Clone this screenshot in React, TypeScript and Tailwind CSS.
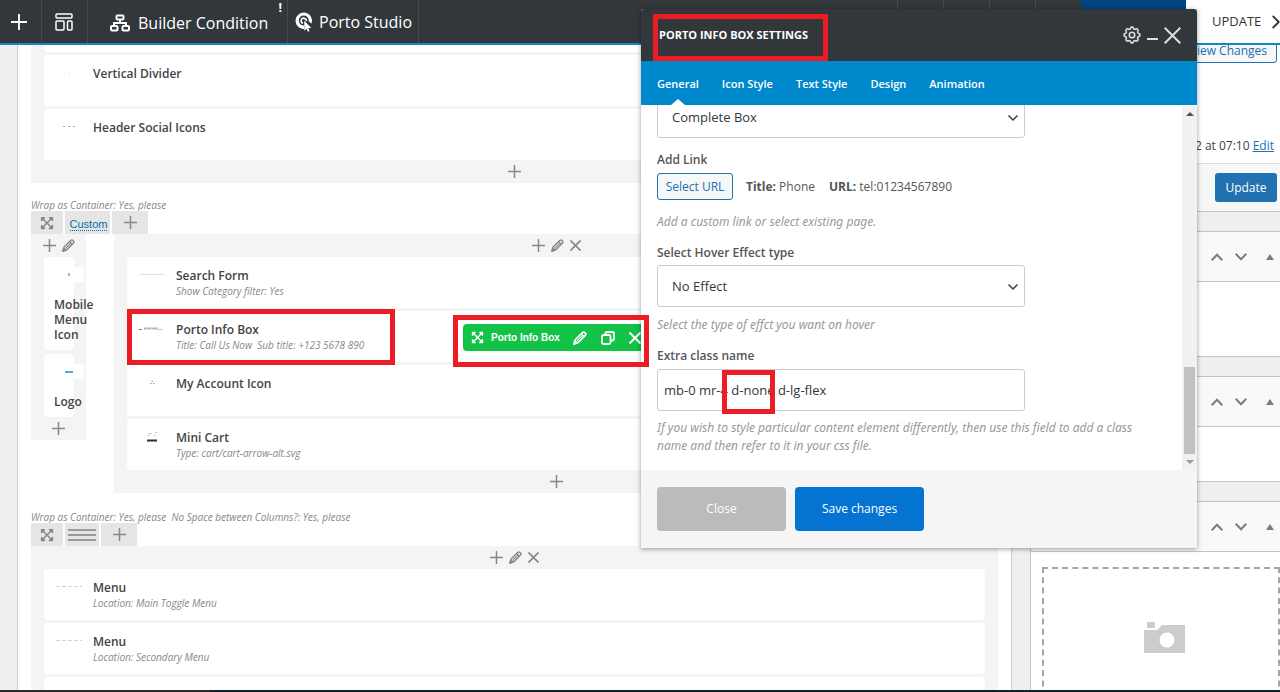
import { useState } from "react";
import type { ReactNode } from "react";
import { ChevronDown, ChevronRight } from "lucide-react";
import { FaExpandArrowsAlt } from "react-icons/fa";

// Outline with eight rounded teeth around a 20x20 centre
const gearPath =
  Array.from({ length: 96 }, (_, i) => {
    const a = (i / 96) * Math.PI * 2;
    const r = 7.9 + Math.tanh(2 * Math.cos(a * 8)) * 0.9;
    return `${i ? "L" : "M"}${(10 + r * Math.sin(a)).toFixed(2)} ${(10 - r * Math.cos(a)).toFixed(2)}`;
  }).join("") + "Z";

function GearIcon() {
  return (
    <svg viewBox="0 0 20 20" className="size-[18px]" fill="none" stroke="currentColor" strokeWidth="1.8">
      <path d={gearPath} strokeLinejoin="round" />
      <circle cx="10" cy="10" r="3" />
    </svg>
  );
}

function PlusIcon({ className = "size-[13px]" }: { className?: string }) {
  return (
    <svg viewBox="0 0 13 13" className={className} stroke="currentColor" strokeWidth="1.5">
      <path d="M6.500 0v13M0 6.500h13" />
    </svg>
  );
}

function CloseIcon({ className = "size-[11px]", strokeWidth = 1.8 }: { className?: string; strokeWidth?: number }) {
  return (
    <svg viewBox="0 0 12 12" className={className} stroke="currentColor" strokeWidth={strokeWidth}>
      <path d="M.5.5l11 11M11.500.5l-11 11" />
    </svg>
  );
}

function PencilIcon({ className = "size-[13px]" }: { className?: string }) {
  return (
    <svg viewBox="0 0 14 14" className={className} fill="none" stroke="currentColor" strokeWidth="1.6" strokeLinejoin="round">
      <path d="M1 13l1.2-4.3 7.2-7.1c.7-.7 1.7-.7 2.4 0l.5.5c.7.7.7 1.6 0 2.3L5.2 11.6z" />
      <path d="M3.6 10.4l6-6M8.3 2.7l3 3" strokeWidth="1.2" />
      <path d="M1 13l.8-2.9 2 2z" fill="currentColor" />
    </svg>
  );
}

function CopyIcon() {
  return (
    <svg viewBox="0 0 14 14" className="size-[14px]" fill="none" stroke="currentColor" strokeWidth="1.8">
      <rect x="1" y="4" width="8.5" height="9" rx="1.5" />
      <path d="M4.500 4V2.500C4.500 1.500 5 1 6 1h5.500c1 0 1.500.5 1.500 1.500V8c0 1-.5 1.500-1.500 1.500h-2" />
    </svg>
  );
}

function LayoutIcon() {
  return (
    <svg viewBox="0 0 18 18" className="size-[18px]" fill="none" stroke="currentColor" strokeWidth="1.5">
      <rect x="1" y="1" width="16" height="4" rx="1" />
      <rect x="1" y="8" width="8" height="9" rx="1" />
      <rect x="12.500" y="8" width="4.500" height="9" rx="1" />
    </svg>
  );
}

function SitemapIcon() {
  return (
    <svg viewBox="0 0 22 18" className="h-[18px] w-[22px]" fill="none" stroke="currentColor" strokeWidth="2">
      <rect x="7.500" y="1.500" width="7" height="4" rx="1" />
      <rect x="2" y="12" width="6.500" height="4.500" rx="1" />
      <rect x="13.500" y="12" width="6.500" height="4.500" rx="1" />
      <path d="M11 5.500V9M5 12V9h12v3" />
    </svg>
  );
}

function StudioIcon() {
  return (
    <svg viewBox="0 0 20 20" className="size-5">
      <path fill="currentColor" d="M8.700.5a8.200 8.200 0 0 0-3 15.800c1 .4 2.600.7 3.300.6l.1-3.400a5 5 0 1 1 4.600-4.200l2.700 2.300A8.200 8.200 0 0 0 8.700.5z" />
      <path fill="none" stroke="currentColor" strokeWidth="1.600" d="M8 11.300a2.600 2.600 0 1 1 3.300-2.200" />
      <path fill="currentColor" d="M9.300 8.700v10l2.300-2 1.300 3 1.600-.7-1.300-2.900 3.100-.2z" />
    </svg>
  );
}

function CameraIcon() {
  return (
    <svg viewBox="0 0 41 31" className="h-[31px] w-[41px]" fill="#ccc">
      <path d="M3 0h8v6H3z" />
      <path fillRule="evenodd" d="M0 8h13l5-5h23v28H0zM23 10.500a7.500 7.500 0 1 0 0 15 7.500 7.500 0 0 0 0-15z" />
    </svg>
  );
}

function BoxArrow({ down }: { down?: boolean }) {
  return (
    <svg viewBox="0 0 12 8" className="h-2 w-3" fill="none" stroke="currentColor" strokeWidth="2">
      <path d={down ? "M.7.8L6 6.300 11.300.8" : "M.7 7.200L6 1.700l5.300 5.500"} />
    </svg>
  );
}

type ThumbKind = "none" | "divider" | "social" | "search" | "info" | "account" | "cart" | "menu";

function Thumb({ kind }: { kind: ThumbKind }) {
  return (
    <svg viewBox="0 0 32 32" className="size-8 shrink-0" fill="none" strokeWidth="1">
      {kind === "divider" && <path d="M16.500 14v4" stroke="#eee" />}
      {kind === "social" && <path d="M10 15.500h12" stroke="#aaa" strokeDasharray="2 3" />}
      {kind === "search" && <path d="M3 15.500h26" stroke="#e2e2e2" />}
      {kind === "info" && (
        <>
          <path d="M3 16.500h3" stroke="#777" />
          <path d="M8 15.500h14" stroke="#aaa" strokeWidth="2" strokeDasharray="2 .5" />
          <path d="M22 16.500h5" stroke="#ccc" />
        </>
      )}
      {kind === "account" && <path d="M14 16.500h1.500M17 16.500h1.500M15.500 14.500h1.500" stroke="#999" />}
      {kind === "cart" && (
        <>
          <path d="M12 12.500h4M12 14.500h2M18 14.500h2M19 11.500h2" stroke="#ccc" />
          <path d="M11 19.500h10" stroke="#2c2f36" strokeWidth="2" />
        </>
      )}
      {kind === "menu" && <path d="M3 15.500h26" stroke="#d4d4d4" strokeDasharray="4 2" />}
    </svg>
  );
}

function ElementCard({ kind = "none", title, note, children }: { kind?: ThumbKind; title?: string; note?: string; children?: ReactNode }) {
  return (
    <div className="relative flex h-[51px] shrink-0 gap-2 rounded-sm bg-white pl-[9px] pt-[2px]">
      <Thumb kind={kind} />
      <div className="pt-2">
        <h4 className="text-xs leading-[18px] font-semibold text-[#444]">{title}</h4>
        {note && <p className="text-[10px] leading-3 whitespace-pre text-[#888] italic">{note}</p>}
      </div>
      {children}
    </div>
  );
}

const iconButton = "flex items-center justify-center text-[#888]";

function ColumnControls({ removable = true }: { removable?: boolean }) {
  return (
    <div className="flex h-[23px] items-center justify-center gap-[6px]">
      <button className={iconButton} aria-label="Add element"><PlusIcon /></button>
      <button className={iconButton} aria-label="Edit column"><PencilIcon /></button>
      {removable && (
        <button className={iconButton} aria-label="Remove column"><CloseIcon /></button>
      )}
    </div>
  );
}

function AddFooter() {
  return (
    <div className="flex h-[23px] items-center justify-center">
      <button className={iconButton} aria-label="Append element"><PlusIcon /></button>
    </div>
  );
}

function RowTabs({ children }: { children: ReactNode }) {
  return (
    <div className="flex h-[23px] gap-[2px]">
      <button className={`${iconButton} w-8 bg-[#e5e5e5]`} aria-label="Move row"><FaExpandArrowsAlt size={14} /></button>
      {children}
      <button className={`${iconButton} w-9 bg-[#e5e5e5]`} aria-label="Add column"><PlusIcon /></button>
    </div>
  );
}

function NarrowCard({ title, wide }: { title: string; wide?: boolean }) {
  return (
    <div className="w-[30px] rounded-sm bg-white pt-[10px] pb-2 pl-[10px]">
      <div className="mb-[15px] flex h-[15px] w-[30px] items-center justify-center bg-white">
        {wide ? <span className="h-[2px] w-2 bg-[#4ab0dd]" /> : <span className="h-[3px] w-[2px] bg-[#7cc6e8]" />}
      </div>
      <h4 className="w-10 text-xs leading-[15px] font-semibold text-[#444]">{title}</h4>
    </div>
  );
}

// Red marker frame, placed over what it points at
function Marker({ className }: { className: string }) {
  return <div className={`pointer-events-none absolute z-30 border-[5px] border-[#ed1c24] ${className}`} />;
}

function TopBar() {
  return (
    <header className="flex h-[45px] shrink-0 border-b-2 border-[#1389c4] bg-[#32373c] text-white">
      <button className="flex w-[42px] items-center justify-center border-r border-[#464b50] pr-1" aria-label="Add">
        <PlusIcon className="size-4" />
      </button>
      <button className="flex w-[46px] items-center justify-center border-r border-[#464b50] pr-[2px]" aria-label="Templates">
        <LayoutIcon />
      </button>
      <button className="relative flex w-[200px] items-center gap-[7px] border-r border-[#464b50] pt-[2px] pl-[21px] text-base whitespace-nowrap">
        <SitemapIcon />
        Builder Condition
        <span className="absolute top-0 right-[5px] text-xs leading-4 font-bold">!</span>
      </button>
      <button className="flex w-[131px] items-center gap-1 border-r border-[#464b50] pt-px pl-[7px] text-base whitespace-nowrap">
        <StudioIcon />
        Porto Studio
      </button>
      <div className="ml-auto flex">
        {[0, 1, 2, 3].map((i) => (
          <div key={i} className="w-[46px] border-l border-[#464b50]" />
        ))}
        <div className="w-[105px] bg-[#004480]" />
        <div className="flex w-[94px] items-center overflow-hidden bg-white pt-px pl-[26px] text-[#32373c]">
          <button className="text-[13px]">UPDATE</button>
          <ChevronRight size={22} strokeWidth={2} className="ml-1 shrink-0" />
        </div>
      </div>
    </header>
  );
}

function Builder() {
  return (
    <main className="ml-[17px] min-w-0 flex-1 overflow-hidden border-x border-[#ccc] bg-white pr-[13px] pl-[13px]">
      <section className="bg-[#f4f4f4] px-[13px]">
        <div className="-mt-[44px] flex flex-col gap-[3px]">
          <ElementCard />
          <ElementCard kind="divider" title="Vertical Divider" />
          <ElementCard kind="social" title="Header Social Icons" />
        </div>
        <AddFooter />
      </section>

      <section className="mt-4">
        <p className="text-[10px] leading-3 text-[#888] italic">Wrap as Container: Yes, please</p>
        <RowTabs>
          <div className="flex w-[45px] items-center justify-center bg-[#e5e5e5] pt-[3px] pl-[2px]">
            <a href="#custom" className="border-b border-dotted border-[#0073aa] font-['Liberation_Sans',sans-serif] text-[11px] leading-3 text-[#0073aa]">Custom</a>
          </div>
        </RowTabs>
        <div className="flex items-start gap-7">
          <div className="w-[55px] bg-[#f4f4f4]">
            <ColumnControls removable={false} />
            <div className="flex flex-col gap-1 pl-[13px]">
              <NarrowCard title="Mobile Menu Icon" />
              <NarrowCard title="Logo" wide />
            </div>
            <AddFooter />
          </div>
          <div className="flex-1 bg-[#f4f4f4] px-[13px]">
            <ColumnControls />
            <div className="flex flex-col gap-[3px]">
              <ElementCard kind="search" title="Search Form" note="Show Category filter: Yes" />
              <ElementCard kind="info" title="Porto Info Box" note="Title: Call Us Now  Sub title: +123 5678 890">
                <Marker className="-top-[2px] left-0 h-14 w-[268px]" />
                <div className="absolute top-[13px] left-1/2 -ml-[93px] flex h-[27px] w-[186px] items-center rounded-sm bg-[#12c348] pr-2 pl-2 text-white">
                  <FaExpandArrowsAlt size={13} />
                  <span className="ml-[7px] flex-1 font-['Liberation_Sans',sans-serif] text-[10px] font-bold whitespace-nowrap">Porto Info Box</span>
                  <div className="flex items-center gap-[14px]">
                    <button aria-label="Edit"><PencilIcon className="size-[14px]" /></button>
                    <button aria-label="Clone"><CopyIcon /></button>
                    <button aria-label="Delete"><CloseIcon className="size-3" strokeWidth={2} /></button>
                  </div>
                  <Marker className="-top-[9px] -left-[10px] h-[52px] w-[196px]" />
                </div>
              </ElementCard>
              <ElementCard kind="account" title="My Account Icon" />
              <ElementCard kind="cart" title="Mini Cart" note="Type: cart/cart-arrow-alt.svg" />
            </div>
            <AddFooter />
          </div>
        </div>
      </section>

      <section className="mt-[18px]">
        <p className="text-[10px] leading-3 whitespace-pre text-[#888] italic">Wrap as Container: Yes, please  No Space between Columns?: Yes, please</p>
        <RowTabs>
          <button className="flex w-[34px] flex-col items-center justify-center gap-[3px] bg-[#e5e5e5]" aria-label="Row layout">
            <span className="h-[2px] w-7 bg-[#999]" />
            <span className="h-[2px] w-7 bg-[#999]" />
            <span className="h-[2px] w-7 bg-[#999]" />
          </button>
        </RowTabs>
        <div className="bg-[#f4f4f4] px-[13px]">
          <ColumnControls />
          <div className="flex flex-col gap-[3px]">
            <ElementCard kind="menu" title="Menu" note="Location: Main Toggle Menu" />
            <ElementCard kind="menu" title="Menu" note="Location: Secondary Menu" />
            <ElementCard />
          </div>
        </div>
      </section>
    </main>
  );
}

function MetaBox({ children, className }: { children?: ReactNode; className: string }) {
  return (
    <section className="mt-[19px] border-y border-l border-[#c3c4c7] bg-white">
      <div className="flex h-[50px] items-center justify-end border-b border-[#c3c4c7] bg-[#f9f9f9] text-[#787c82]">
        <button aria-label="Move up"><BoxArrow /></button>
        <button aria-label="Move down" className="ml-3"><BoxArrow down /></button>
        <button aria-label="Toggle panel" className="mr-[6px] ml-[19px]">
          <svg viewBox="0 0 8 6" className="h-[6px] w-2" fill="currentColor"><path d="M4 0l4 6H0z" /></svg>
        </button>
      </div>
      <div className={className}>{children}</div>
    </section>
  );
}

function Sidebar() {
  return (
    <aside className="ml-[18px] w-[250px] shrink-0 overflow-hidden">
      <section className="border-b border-l border-[#c3c4c7] bg-white">
        <div className="flex h-[118px] flex-col items-end justify-between pr-[3px] pb-2">
          <button className="-mt-[12px] h-[30px] rounded-[3px] border border-[#2271b1] bg-[#f6f7f7] px-[9px] pt-[6px] text-xs text-[#2271b1]">Preview Changes</button>
          <p className="pr-[3px] text-xs leading-[18px] text-[#3c434a]">
            2022 at 07:10 <a href="#edit" className="text-[#2271b1] underline">Edit</a>
          </p>
        </div>
        <div className="flex h-12 items-center justify-end border-t border-[#dcdcde] bg-[#f6f7f7] pr-[3px]">
          <button className="h-[29px] w-[62px] rounded-[3px] bg-[#2271b1] text-xs text-white">Update</button>
        </div>
      </section>
      <MetaBox className="h-[74px]" />
      <MetaBox className="h-[54px]" />
      <MetaBox className="pt-[15px] pl-[11px]">
        <div className="flex h-[140px] items-center justify-center border-2 border-dashed border-[#a5a5a5] pl-[6px]">
          <CameraIcon />
        </div>
      </MetaBox>
    </aside>
  );
}

const tabs = ["General", "Icon Style", "Text Style", "Design", "Animation"];
const fieldClass = "h-[42px] w-full appearance-none rounded-[3px] border border-[#ccc] bg-white text-[13px] text-[#32373c] outline-none";
const hintClass = "font-['Noto_Sans',sans-serif] text-xs leading-[18px] text-[#999] italic";
const labelClass = "text-xs leading-[18px] font-semibold";

function SelectField({ id, label, value }: { id: string; label: string; value: string }) {
  return (
    <div className="relative w-[368px]">
      <select id={id} aria-label={label} className={`${fieldClass} px-[14px]`}>
        <option>{value}</option>
      </select>
      <ChevronDown size={16} strokeWidth={2.500} className="pointer-events-none absolute top-[14px] right-1 text-[#444]" />
    </div>
  );
}

function SettingsDialog() {
  const [active, setActive] = useState("General");
  const [extraClass, setExtraClass] = useState("mb-0 mr-4 d-none d-lg-flex");

  return (
    <div role="dialog" aria-label="Porto Info Box Settings" className="absolute top-[9px] right-[83px] z-20 w-[556px] overflow-hidden rounded-t-[3px] bg-white text-[#555] shadow-[0_1px_5px_rgba(0,0,0,0.4)]">
      <div className="relative flex h-[52px] items-center justify-between bg-[#32373c] pr-4 pl-[18px]">
        <h2 className="text-[11px] font-bold text-white">PORTO INFO BOX SETTINGS</h2>
        <Marker className="top-[5px] left-3 h-[47px] w-[175px]" />
        <div className="flex items-center text-[#ddd]">
          <button aria-label="Options"><GearIcon /></button>
          <button aria-label="Minimize" className="ml-[6px] flex h-4 w-[11px] items-end pb-[3px]"><span className="h-[2px] w-full bg-[#ddd]" /></button>
          <button aria-label="Close dialog" className="ml-[6px]"><CloseIcon className="size-[17px]" strokeWidth={1.4} /></button>
        </div>
      </div>

      <div role="tablist" className="flex h-11 gap-[23px] bg-[#0088cc] pl-4 text-[11px] font-semibold text-white">
        {tabs.map((tab) => (
          <button key={tab} role="tab" aria-selected={tab === active} onClick={() => setActive(tab)} className="relative pt-[2px]">
            {tab}
            {tab === active && (
              <span className="absolute bottom-0 left-1/2 -ml-[7px] border-x-[7px] border-b-[6px] border-x-transparent border-b-white" />
            )}
          </button>
        ))}
      </div>

      <div className="flex h-[365px] overflow-hidden">
        <div className="flex-1 pl-4 text-[13px] leading-[18px]">
          <div className="-mt-[9px]">
            <SelectField id="link-scope" label="Apply link to" value="Complete Box" />
          </div>

          <h3 className={`mt-[13px] ${labelClass}`}>Add Link</h3>
          <div className="mt-1 flex items-center text-xs">
            <button className="h-[27px] w-[76px] rounded-[3px] border border-[#2271b1] bg-[#f6f7f7] text-[#2271b1]">Select URL</button>
            <span className="ml-[13px]"><b>Title:</b> Phone</span>
            <span className="ml-[14px]"><b>URL:</b> tel:01234567890</span>
          </div>
          <p className={`mt-[13px] ${hintClass}`}>Add a custom link or select existing page.</p>

          <label htmlFor="hover-effect" className={`mt-[13px] mb-[3px] block ${labelClass}`}>Select Hover Effect type</label>
          <SelectField id="hover-effect" label="Select Hover Effect type" value="No Effect" />
          <p className={`mt-[9px] ${hintClass}`}>Select the type of effct you want on hover</p>

          <label htmlFor="extra-class" className={`mt-[13px] mb-1 block ${labelClass}`}>Extra class name</label>
          <div className="relative w-[368px]">
            <input id="extra-class" type="text" value={extraClass} onChange={(e) => setExtraClass(e.target.value)} className={`${fieldClass} px-[6px]`} />
            <Marker className="top-[1px] left-[65px] h-11 w-[53px]" />
          </div>
          <p className={`mt-2 mr-7 ${hintClass}`}>
            If you wish to style particular content element differently, then use this field to add a class name and then refer to it in your css file.
          </p>
        </div>
        <div className="mt-px flex w-[15px] flex-col items-center bg-[#f1f1f1] py-[6px]">
          <svg viewBox="0 0 8 4" className="h-1 w-2" fill="#505050"><path d="M4 0l4 4H0z" /></svg>
          <div className="mt-auto mb-[6px] h-[87px] w-[11px] bg-[#c1c1c1]" />
          <svg viewBox="0 0 8 4" className="h-1 w-2" fill="#999"><path d="M4 4l4-4H0z" /></svg>
        </div>
      </div>

      <div className="flex gap-[9px] bg-[#f5f5f5] px-4 py-[17px] text-xs">
        <button className="h-11 w-[129px] rounded-[4px] bg-[#bbb] text-white">Close</button>
        <button className="h-11 w-[129px] rounded-[4px] bg-[#0573d1] font-medium text-white">Save changes</button>
      </div>
    </div>
  );
}

export default function App() {
  return (
    <div className="relative flex h-screen flex-col overflow-hidden bg-[#efefef] font-['Open_Sans','Noto_Sans',sans-serif]">
      <TopBar />
      <div className="flex min-h-0 flex-1">
        <Builder />
        <Sidebar />
      </div>
      <div className="flex h-[2px] shrink-0 bg-[#12222d]">
        <div className="w-[210px] bg-[#2b2b2b]" />
      </div>
      <SettingsDialog />
    </div>
  );
}
